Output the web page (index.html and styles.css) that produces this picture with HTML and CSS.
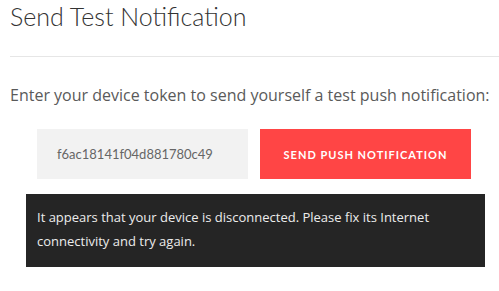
FILE: index.html
```html
<!DOCTYPE html>
<html>
<head>
<meta charset="utf-8">
<link rel="stylesheet" href="styles.css">
</head>
<body>
<div class="page">
  <h1 class="title">Send Test Notification</h1>
  <div class="divider"></div>
  <p class="intro">Enter your device token to send yourself a test push notification:</p>
  <div class="form-row">
    <div class="token-input">f6ac18141f04d881780c49</div>
    <button class="send-btn">SEND PUSH NOTIFICATION</button>
  </div>
  <div class="alert">It appears that your device is disconnected. Please fix its Internet connectivity and try again.</div>
</div>
</body>
</html>
```
FILE: styles.css
```css
html, body {
  margin: 0;
  padding: 0;
  background: #ffffff;
}
.page {
  padding-left: 10px;
  width: 489px;
}
.title {
  margin: 0;
  padding-top: 1px;
  font-family: "Lato", "Liberation Sans", sans-serif;
  font-weight: 300;
  font-size: 25px;
  line-height: 30px;
  color: #333333;
}
.divider {
  margin-top: 25px;
  height: 1px;
  background: #e6e6e6;
}
.intro {
  margin: 26px 0 0 0;
  font-family: "Open Sans", "Liberation Sans", sans-serif;
  font-size: 16px;
  line-height: 24px;
  color: #5a5a5a;
}
.form-row {
  display: flex;
  gap: 12px;
  margin-top: 22px;
  margin-left: 27px;
}
.token-input {
  box-sizing: border-box;
  width: 211px;
  height: 50px;
  background: #f2f2f2;
  padding-left: 20px;
  display: flex;
  align-items: center;
  font-family: "Lato", "Liberation Sans", sans-serif;
  font-size: 13px;
  color: #666666;
}
.send-btn {
  box-sizing: border-box;
  width: 211px;
  height: 50px;
  border: 0;
  margin: 0;
  padding: 0;
  background: #ff4545;
  color: #ffffff;
  font-family: "Lato", "Liberation Sans", sans-serif;
  font-weight: 700;
  font-size: 11px;
  letter-spacing: 1px;
}
.alert {
  box-sizing: border-box;
  margin-top: 15px;
  margin-left: 16px;
  width: 459px;
  height: 73px;
  background: #252525;
  color: #ececec;
  padding: 11px 20px 0 11px;
  font-family: "Open Sans", "Liberation Sans", sans-serif;
  font-size: 13px;
  line-height: 24px;
}
```
